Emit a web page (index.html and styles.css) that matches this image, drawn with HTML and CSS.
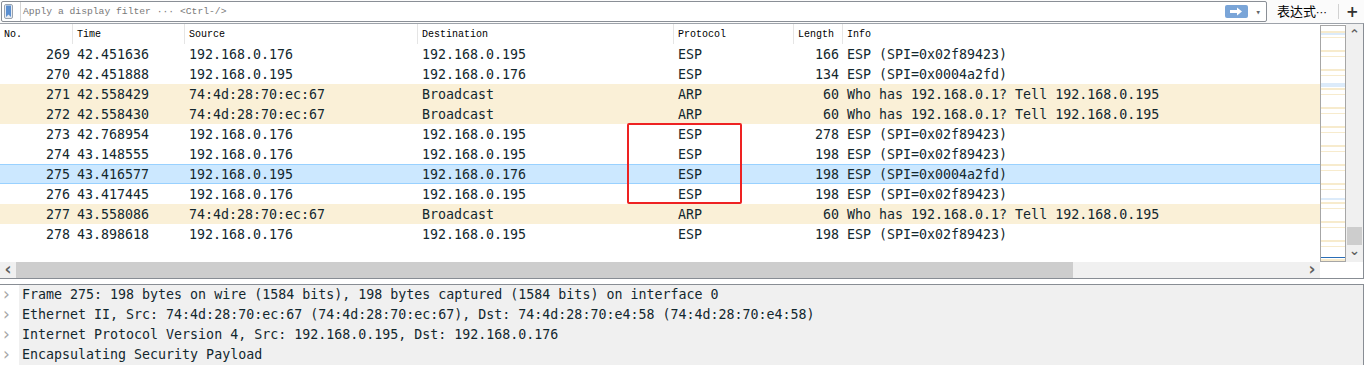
FILE: index.html
```html
<!DOCTYPE html>
<html lang="en" dir="ltr">
  <head>
    <meta charset="utf-8">
    <title>packet list</title>
    <link rel="stylesheet" href="styles.css">
  </head>
  <body>

    <header class="toolbar">
      <div class="filter">
        <span class="bookmark">
          <svg width="9" height="15" viewBox="0 0 9 15"><rect x="0.5" y="0.5" width="8" height="14" rx="1.5" fill="#e8ecf2" stroke="#9aa3ae"/><path d="M2 1.5 H7 V13 L4.5 10.5 L2 13 Z" fill="#5b8fd0"/></svg>
        </span>
        <span class="placeholder">Apply a display filter &middot;&middot;&middot; &lt;Ctrl-/&gt;</span>
        <span class="apply">
          <svg width="23" height="13" viewBox="0 0 23 13"><rect x="0" y="0" width="23" height="13" rx="2" fill="#7aa5d8"/><path d="M5 5 H12 V2.5 L17 6.5 L12 10.5 V8 H5 Z" fill="#fff"/></svg>
        </span>
        <span class="drop">&#9662;</span>
      </div>
      <span class="expr">表达式<span class="dots">&#8943;</span></span>
      <span class="sep"></span>
      <span class="plus">+</span>
    </header>

    <section class="packets">
      <div class="list">
        <div class="row head">
          <span>No.</span><span>Time</span><span>Source</span><span>Destination</span><span>Protocol</span><span>Length</span><span>Info</span>
        </div>
        <div class="row">
          <span>269</span><span>42.451636</span><span>192.168.0.176</span><span>192.168.0.195</span><span>ESP</span><span>166</span><span>ESP (SPI=0x02f89423)</span>
        </div>
        <div class="row">
          <span>270</span><span>42.451888</span><span>192.168.0.195</span><span>192.168.0.176</span><span>ESP</span><span>134</span><span>ESP (SPI=0x0004a2fd)</span>
        </div>
        <div class="row arp">
          <span>271</span><span>42.558429</span><span>74:4d:28:70:ec:67</span><span>Broadcast</span><span>ARP</span><span>60</span><span>Who has 192.168.0.1? Tell 192.168.0.195</span>
        </div>
        <div class="row arp">
          <span>272</span><span>42.558430</span><span>74:4d:28:70:ec:67</span><span>Broadcast</span><span>ARP</span><span>60</span><span>Who has 192.168.0.1? Tell 192.168.0.195</span>
        </div>
        <div class="row">
          <span>273</span><span>42.768954</span><span>192.168.0.176</span><span>192.168.0.195</span><span>ESP</span><span>278</span><span>ESP (SPI=0x02f89423)</span>
        </div>
        <div class="row">
          <span>274</span><span>43.148555</span><span>192.168.0.176</span><span>192.168.0.195</span><span>ESP</span><span>198</span><span>ESP (SPI=0x02f89423)</span>
        </div>
        <div class="row selected">
          <span>275</span><span>43.416577</span><span>192.168.0.195</span><span>192.168.0.176</span><span>ESP</span><span>198</span><span>ESP (SPI=0x0004a2fd)</span>
        </div>
        <div class="row">
          <span>276</span><span>43.417445</span><span>192.168.0.176</span><span>192.168.0.195</span><span>ESP</span><span>198</span><span>ESP (SPI=0x02f89423)</span>
        </div>
        <div class="row arp">
          <span>277</span><span>43.558086</span><span>74:4d:28:70:ec:67</span><span>Broadcast</span><span>ARP</span><span>60</span><span>Who has 192.168.0.1? Tell 192.168.0.195</span>
        </div>
        <div class="row">
          <span>278</span><span>43.898618</span><span>192.168.0.176</span><span>192.168.0.195</span><span>ESP</span><span>198</span><span>ESP (SPI=0x02f89423)</span>
        </div>
        <div class="mark"></div>
      </div>
      <div class="minimap"></div>
      <div class="vscroll">
        <span class="arrow">&#8963;</span>
        <span class="track"><span class="thumb"></span></span>
        <span class="arrow down">&#8964;</span>
      </div>
      <div class="hscroll">
        <span class="arrow">&lsaquo;</span>
        <span class="track"><span class="thumb"></span></span>
        <span class="arrow">&rsaquo;</span>
      </div>
      <div class="corner"></div>
    </section>

    <section class="details">
      <div class="node"><span class="chev">&rsaquo;</span><span class="label">Frame 275: 198 bytes on wire (1584 bits), 198 bytes captured (1584 bits) on interface 0</span></div>
      <div class="node"><span class="chev">&rsaquo;</span><span class="label">Ethernet II, Src: 74:4d:28:70:ec:67 (74:4d:28:70:ec:67), Dst: 74:4d:28:70:e4:58 (74:4d:28:70:e4:58)</span></div>
      <div class="node"><span class="chev">&rsaquo;</span><span class="label">Internet Protocol Version 4, Src: 192.168.0.195, Dst: 192.168.0.176</span></div>
      <div class="node"><span class="chev">&rsaquo;</span><span class="label">Encapsulating Security Payload</span></div>
    </section>

  </body>
</html>
```

FILE: styles.css
```css
* { box-sizing: border-box; }

body {
  margin: 0;
  width: 1364px;
  height: 381px;
  overflow: hidden;
  background-color: #fff;
  font-family: 'DejaVu Sans Mono', monospace;
  color: #12272e;
}

/* filter toolbar */

.toolbar {
  display: flex;
  align-items: center;
  height: 23px;
  padding: 1px 0 1px 1px;
  background-color: #fbfbfb;
  white-space: nowrap;
}

.toolbar > * { flex-shrink: 0; }

.filter {
  display: flex;
  align-items: center;
  width: 1266px;
  height: 21px;
  border: 1px solid #8a8f96;
  border-radius: 2px;
  background-color: #fff;
}

.bookmark {
  display: flex;
  padding: 0 7px 0 2px;
  height: 19px;
  align-items: center;
  border-right: 1px solid #d6d6d6;
}

.placeholder {
  flex: 1;
  padding-left: 2px;
  font-family: 'Liberation Mono', monospace;
  font-size: 9.7px;
  color: #7a7a7a;
}

.apply {
  display: flex;
  margin-right: 8px;
}

.drop {
  font-size: 9px;
  color: #666;
  margin-right: 5px;
}

.expr {
  margin-left: 10px;
  font-family: 'Noto Sans CJK SC', sans-serif;
  font-size: 13px;
  line-height: 16px;
  color: #000;
}

.dots {
  font-family: 'DejaVu Sans', sans-serif;
  font-size: 11px;
}

.sep {
  width: 1px;
  height: 15px;
  margin-left: 11px;
  background-color: #d2d2d2;
}

.plus {
  margin-left: 7px;
  font-family: 'DejaVu Sans', sans-serif;
  font-weight: bold;
  font-size: 15px;
  color: #333;
}

/* packet list */

.packets {
  display: grid;
  grid-template-columns: 1320px 26px 17px;
  grid-template-rows: 238px 16px;
  height: 256px;
  width: 1364px;
  border-top: 1px solid #9ea3aa;
  border-right: 1px solid #888d94;
  border-bottom: 1px solid #888d94;
  margin-bottom: 5px;
}

.list {
  grid-column: 1;
  grid-row: 1;
  position: relative;
  overflow: hidden;
}

.row {
  display: grid;
  grid-template-columns: 73px 112px 233px 256px 120px 49px 1fr;
  height: 20px;
  align-items: center;
  font-size: 13.3px;
  white-space: nowrap;
}

.row span { padding-left: 4px; }
.row span:first-child { text-align: right; padding-right: 3px; }
.row span:nth-child(6) { text-align: right; padding-right: 4px; }

.row.head {
  font-family: 'Liberation Mono', monospace;
  font-size: 10px;
  color: #000;
}

.row.head span {
  text-align: left;
  padding-left: 4px;
  height: 20px;
  line-height: 21px;
  border-right: 1px solid #e5e5e5;
}

.row.head span:first-child { padding-left: 4px; }
.row.head span:last-child { border-right: none; }

.row.arp { background-color: #faf0d7; }

.row.selected {
  background-color: #cce8ff;
  border-top: 1px solid #99d1ff;
  border-bottom: 1px solid #99d1ff;
}

.mark {
  position: absolute;
  left: 627px;
  top: 99px;
  width: 115px;
  height: 81px;
  border: 2px solid #ee2222;
  border-radius: 2px;
}

.minimap {
  grid-column: 2;
  grid-row: 1;
  border: 1px solid #a6a6a6;
  margin-top: 1px;
  background-color: #fff;
  background-image:
    linear-gradient(#2a6db5, #2a6db5),
    linear-gradient(#dcebfa, #dcebfa),
    linear-gradient(#dcebfa, #dcebfa),
    linear-gradient(#dcebfa, #dcebfa),
    repeating-linear-gradient(to bottom, #fff 0px, #fff 5px, #f7ebcd 5px, #f7ebcd 7px, #fff 7px, #fff 11px, #f7ebcd 11px, #f7ebcd 12px, #fff 12px, #fff 19px);
  background-size: 100% 1px, 100% 4px, 100% 2px, 100% 2px, 100% 100%;
  background-position: 0 231px, 0 57px, 0 7px, 0 172px, 0 0;
  background-repeat: no-repeat;
}

.vscroll {
  grid-column: 3;
  grid-row: 1;
  display: flex;
  flex-direction: column;
  background-color: #f0f0f0;
  font-family: 'DejaVu Sans', sans-serif;
  color: #606060;
}

.vscroll .arrow {
  height: 17px;
  text-align: center;
  font-size: 13px;
  font-weight: bold;
  line-height: 22px;
}

.vscroll .arrow.down { line-height: 12px; }

.vscroll .track {
  flex: 1;
  display: flex;
  flex-direction: column;
  justify-content: flex-end;
}

.vscroll .thumb {
  height: 18px;
  margin: 0 1px;
  background-color: #cdcdcd;
}

.hscroll {
  grid-column: 1;
  grid-row: 2;
  display: flex;
  background-color: #f0f0f0;
  font-family: 'DejaVu Sans', sans-serif;
  color: #606060;
}

.hscroll .arrow {
  width: 16px;
  text-align: center;
  font-size: 17px;
  font-weight: bold;
  line-height: 14px;
}

.hscroll .track {
  flex: 1;
  display: flex;
}

.hscroll .thumb {
  width: 1057px;
  background-color: #cdcdcd;
}

.corner {
  grid-column: 2 / 4;
  grid-row: 2;
  background-color: #fff;
}

/* packet details */

.details {
  width: 1364px;
  border-top: 1px solid #888d94;
  border-right: 1px solid #888d94;
}

.node {
  display: flex;
  height: 20px;
  align-items: center;
  font-size: 13.3px;
  white-space: nowrap;
}

.chev {
  width: 19px;
  height: 20px;
  line-height: 19px;
  padding-left: 3px;
  font-family: 'DejaVu Sans', sans-serif;
  font-size: 17px;
  color: #a8a8a8;
  background-color: #fff;
}

.label {
  flex: 1;
  height: 20px;
  line-height: 20px;
  padding-left: 3px;
  background-color: #f0f0f0;
}
```
